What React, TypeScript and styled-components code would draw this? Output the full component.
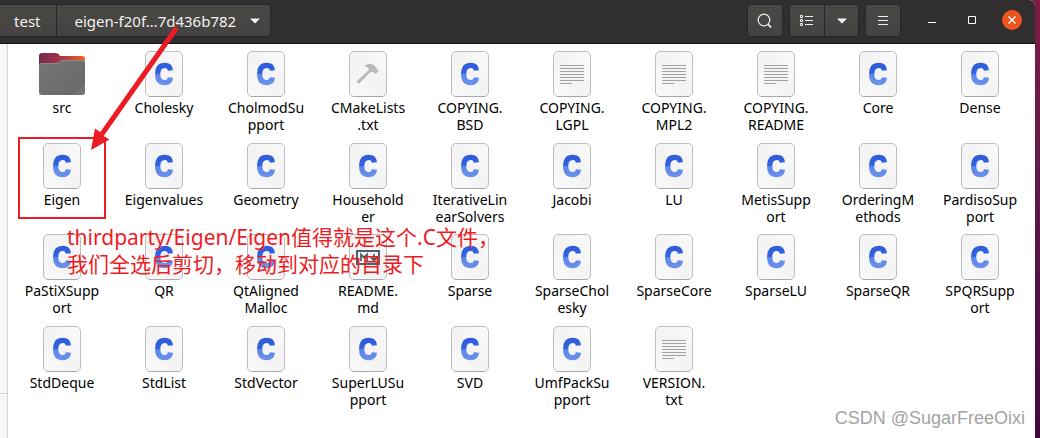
import React from 'react';
import styled, { createGlobalStyle } from 'styled-components';

const Global = createGlobalStyle`
  *, *::before, *::after { box-sizing: border-box; }
  html, body { margin: 0; overflow: hidden; }
  body { font-family: "Noto Sans", "Noto Sans CJK SC", sans-serif; color: #000; }
`;

const Desktop = styled.div`
  position: relative;
  min-height: 100vh;
  padding-right: 5px;
  background: linear-gradient(#7e1c40, #5f1a4a 40%, #42073f);
`;
const Window = styled.main`
  display: flex;
  flex-direction: column;
  min-height: 100vh;
  background: #fff;
  border-radius: 0 6px 0 0;
  overflow: hidden;
`;
const HeaderBar = styled.header`
  display: flex;
  align-items: flex-start;
  justify-content: space-between;
  height: 44px;
  padding-top: 4px;
  background: #302e2f;
  border-bottom: 1px solid #131212;
`;
const Group = styled.div`
  display: flex;
  height: 33px;
  border: 1px solid #262425;
  border-radius: 4px;
  overflow: hidden;
`;
const PathGroup = styled(Group)`
  border-left: 0;
  border-radius: 0 4px 4px 0;
`;
const Button = styled.button`
  display: flex;
  align-items: center;
  justify-content: center;
  width: 34px;
  padding: 0;
  border: 0;
  background: linear-gradient(#4a4845, #454341);
  color: #f2f1f0;
  & + & { border-left: 1px solid #262425; }
`;
const PathButton = styled(Button)<{ $current?: boolean }>`
  gap: 14px;
  width: auto;
  padding: ${(p) => (p.$current ? '0 10px 0 17px' : '0 16px 0 14px')};
  font: 15px/20px "Noto Sans", sans-serif;
`;
const Tools = styled.div`
  display: flex;
  gap: 6px;
  padding-right: 13px;
`;
const Controls = styled.div`
  display: flex;
  align-items: center;
  gap: 20px;
  height: 32px;
  padding-left: 15px;
`;
const Control = styled.button<{ $close?: boolean }>`
  display: grid;
  place-items: center;
  width: 20px;
  height: 20px;
  padding: 0;
  border: 0;
  border-radius: 50%;
  background: ${(p) => (p.$close ? '#e95420' : 'transparent')};
`;
const Body = styled.div`
  display: flex;
  flex: 1;
`;
const Sidebar = styled.aside`
  display: flex;
  flex-direction: column;
  justify-content: flex-end;
  width: 8px;
  padding-bottom: 44px;
  background: #f6f6f6;
  border-right: 1px solid #d5d3d1;
`;
const Divider = styled.hr`
  width: 100%;
  margin: 0;
  border: 0;
  border-top: 1px solid #d5d3d1;
`;
const Files = styled.ul`
  display: grid;
  flex: 1;
  grid-template-columns: repeat(auto-fill, 102px);
  grid-auto-rows: 92px 91px;
  align-content: start;
  margin: 0;
  padding: 6px 0 0 3px;
  list-style: none;
`;
const File = styled.li`
  display: flex;
  flex-direction: column;
  align-items: center;
  gap: 1px;
`;
const FileIcon = styled.svg`
  display: block;
  width: 48px;
  height: 48px;
`;
const FileName = styled.span`
  font-size: 14px;
  line-height: 17px;
  text-align: center;
  white-space: pre-line;
`;
const Marks = styled.svg`
  position: absolute;
  top: 0;
  left: 0;
  width: 240px;
  height: 230px;
  pointer-events: none;
`;
const Note = styled.p`
  position: absolute;
  top: 224px;
  left: 67px;
  margin: 0;
  color: #ed1c24;
  font: 21px/27px "Noto Sans", "Noto Sans CJK SC", sans-serif;
  white-space: pre;
`;
const Watermark = styled.span`
  position: absolute;
  right: 15px;
  bottom: 9px;
  color: #a3a3a3;
  font: 18px/22px "Liberation Sans", sans-serif;
  text-shadow: -1px -1px 0 #fff;
`;

type Kind = 'c' | 'text' | 'build' | 'md' | 'folder';

const Sheet = () => (
  <>
    <rect x="5.5" y="1.5" width="37" height="45" rx="4.5" fill="url(#paper)" stroke="#bdbdbd" />
    <path d="M9 46.5h30" stroke="#a8a8a8" />
  </>
);

const Icon = ({ kind }: { kind: Kind }) => (
  <FileIcon viewBox="0 0 48 48" aria-hidden="true">
    {kind !== 'folder' && <Sheet />}
    {kind === 'c' && (
      <path d="M30.400 20.400C30.100 17 28.200 15.300 24.800 15.300C19.800 15.300 17.700 18.500 17.700 24S19.800 32.700 24.800 32.700C28.200 32.700 30.100 31 30.400 27.600" fill="none" stroke="url(#blue)" strokeWidth="5.200" />
    )}
    {kind === 'text' && (
      <path d="M12 15.500h24M12 18.500h24M12 21.500h24M12 24.500h24M12 27.500h24M12 30.500h24M12 33.500h12" stroke="#a2a2a2" />
    )}
    {kind === 'build' && (
      <path d="M21 15.500c3-2 7-2.100 10 .5l2 3.200 2 1.100-3.200 4-2.300-2.200-2.500-.3-1.200 1L15.500 33.300c-1.300.7-3-1-2.200-2.600L24.600 20.200c.6-2.200-1-3.200-3.600-4z" fill="#b9b9b9" />
    )}
    {kind === 'md' && (
      <>
        <rect x="13" y="18" width="22" height="13" fill="none" stroke="#536069" strokeWidth="2" />
        <path d="M17 28v-6.500l3 3 3-3V28M30 21v6M27 24.500l3 3 3-3" fill="none" stroke="#536069" strokeWidth="1.800" />
      </>
    )}
    {kind === 'folder' && (
      <>
        <path d="M1 40V6q0-3 3-3h14q2 0 3 1.500l1 1.500h22q3 0 3 3v31z" fill="url(#flap)" />
        <path d="M1 16q0-3 3-3h14q2 0 3-1l1-1q1-1 2-1h20q3 0 3 3v29q0 3-3 3H4q-3 0-3-3z" fill="url(#front)" />
        <path d="M1.500 15.500q.5-2 2.500-2h14q2 0 3-1l1-1q1-1 2-1h20q2 0 2.500 2" fill="none" stroke="#8d8886" />
        <path d="M47 33v9q0 3-3 3h-9z" fill="#858585" opacity=".4" />
      </>
    )}
  </FileIcon>
);

const files: [string, Kind][] = [
  ['src', 'folder'], ['Cholesky', 'c'], ['CholmodSu\npport', 'c'], ['CMakeLists\n.txt', 'build'],
  ['COPYING.\nBSD', 'c'], ['COPYING.\nLGPL', 'text'], ['COPYING.\nMPL2', 'text'], ['COPYING.\nREADME', 'text'],
  ['Core', 'c'], ['Dense', 'c'],
  ['Eigen', 'c'], ['Eigenvalues', 'c'], ['Geometry', 'c'], ['Household\ner', 'c'], ['IterativeLin\nearSolvers', 'c'],
  ['Jacobi', 'c'], ['LU', 'c'], ['MetisSupp\nort', 'c'], ['OrderingM\nethods', 'c'], ['PardisoSup\nport', 'c'],
  ['PaStiXSupp\nort', 'c'], ['QR', 'c'], ['QtAligned\nMalloc', 'c'], ['README.\nmd', 'md'], ['Sparse', 'c'],
  ['SparseChol\nesky', 'c'], ['SparseCore', 'c'], ['SparseLU', 'c'], ['SparseQR', 'c'], ['SPQRSupp\nort', 'c'],
  ['StdDeque', 'c'], ['StdList', 'c'], ['StdVector', 'c'], ['SuperLUSu\npport', 'c'], ['SVD', 'c'],
  ['UmfPackSu\npport', 'c'], ['VERSION.\ntxt', 'text'],
];

const GradientDefs = styled.svg`
  position: absolute;
  width: 0;
  height: 0;
`;

const Gradients = () => (
  <GradientDefs aria-hidden="true">
    <defs>
      <linearGradient id="paper" x1="0" y1="1" x2="1" y2="0">
        <stop offset="0" stopColor="#fafafa" /><stop offset=".5" stopColor="#f3f3f3" /><stop offset="1" stopColor="#fafafa" />
      </linearGradient>
      <linearGradient id="blue" gradientUnits="userSpaceOnUse" x1="0" y1="12" x2="0" y2="36">
        <stop offset="0" stopColor="#2e5ad8" /><stop offset=".5" stopColor="#3264e2" />
        <stop offset=".5" stopColor="#5a85e8" /><stop offset="1" stopColor="#6c92ec" />
      </linearGradient>
      <linearGradient id="flap"><stop offset="0" stopColor="#77264f" /><stop offset=".5" stopColor="#a93645" /><stop offset="1" stopColor="#f26322" /></linearGradient>
      <linearGradient id="front" x1="0" y1="0" x2="1" y2="1"><stop offset="0" stopColor="#757575" /><stop offset="1" stopColor="#686868" /></linearGradient>
    </defs>
  </GradientDefs>
);

const Caret = () => (
  <svg width="10" height="6" viewBox="0 0 10 6" aria-hidden="true"><path d="M0 .5h10L5 5.500z" fill="#f5f5f4" /></svg>
);

export default function App() {
  return (
    <Desktop>
      <Global />
      <Gradients />
      <Window>
        <HeaderBar>
          <PathGroup>
            <PathButton>test</PathButton>
            <PathButton $current>eigen-f20f…7d436b782 <Caret /></PathButton>
          </PathGroup>
          <Tools>
            <Group>
              <Button aria-label="Search">
                <svg width="16" height="16" viewBox="0 0 16 16" fill="none" stroke="#f0efee" strokeWidth="1.200"><circle cx="7" cy="7" r="5.800" /><path d="M11 11.300l3 3" strokeWidth="1.800" /></svg>
              </Button>
            </Group>
            <Group>
              <Button aria-label="List view">
                <svg width="14" height="12" viewBox="0 0 14 12" fill="none" stroke="#f0efee"><path d="M.5.5h2v2h-2zM.5 4.500h2v2h-2zM.5 8.500h2v2h-2zM5 1.500h8M5 5.500h8M5 9.500h8" /></svg>
              </Button>
              <Button aria-label="View options"><Caret /></Button>
            </Group>
            <Group>
              <Button aria-label="Menu">
                <svg width="10" height="10" viewBox="0 0 10 10" stroke="#f0efee"><path d="M0 .5h10M0 4.500h10M0 8.500h10" /></svg>
              </Button>
            </Group>
            <Controls>
              <Control aria-label="Minimize"><svg width="8" height="8" viewBox="0 0 8 8"><path d="M0 6.500h8" stroke="#fff" /></svg></Control>
              <Control aria-label="Maximize"><svg width="8" height="8" viewBox="0 0 8 8"><path d="M.5.5h7v7h-7z" fill="none" stroke="#fff" /></svg></Control>
              <Control $close aria-label="Close"><svg width="8" height="8" viewBox="0 0 8 8"><path d="M.5.5l7 7M7.500.5l-7 7" stroke="#fff" strokeWidth="1.400" /></svg></Control>
            </Controls>
          </Tools>
        </HeaderBar>
        <Body>
          <Sidebar><Divider /></Sidebar>
          <Files>
            {files.map(([name, kind]) => (
              <File key={name}><Icon kind={kind} /><FileName>{name}</FileName></File>
            ))}
          </Files>
        </Body>
      </Window>
      <Marks viewBox="0 0 240 230" aria-hidden="true">
        <rect x="19" y="138" width="86" height="80" fill="none" stroke="#ed1c24" strokeWidth="2" />
        <path d="M175.500 29.500L102 134" stroke="#ed1c24" strokeWidth="5" strokeLinecap="round" />
        <path d="M91 150L95 128.500L99.500 131.500L105 137L109.500 139.500z" fill="#ed1c24" />
      </Marks>
      <Note>{'thirdparty/Eigen/Eigen值得就是这个.C文件，\n我们全选后剪切，移动到对应的目录下'}</Note>
      <Watermark>CSDN @SugarFreeOixi</Watermark>
    </Desktop>
  );
}
